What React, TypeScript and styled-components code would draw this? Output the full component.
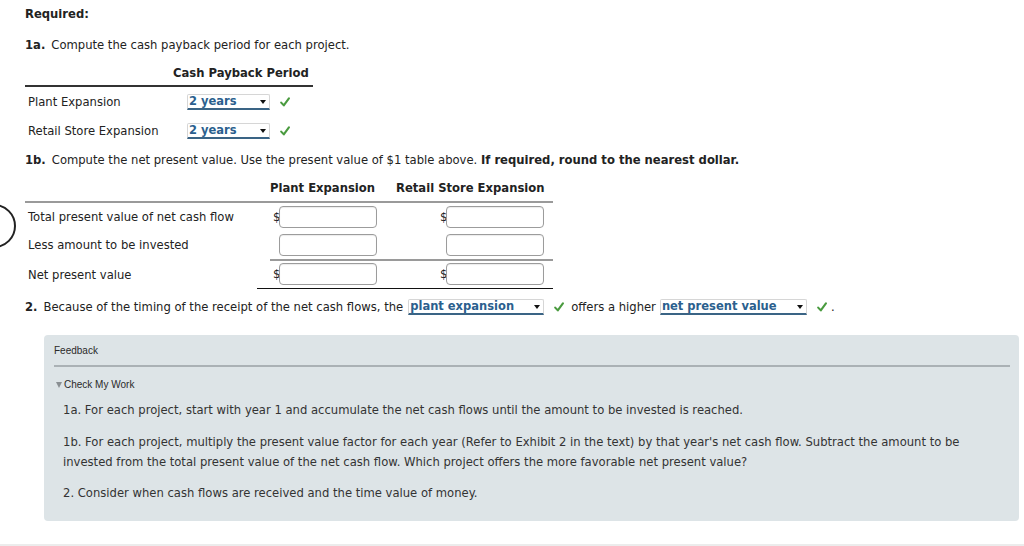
import React from "react";
import styled, { createGlobalStyle } from "styled-components";

const GlobalStyle = createGlobalStyle`
  html, body { margin: 0; padding: 0; background: #fff; }
  body {
    font-family: "DejaVu Sans", Verdana, sans-serif;
    font-size: 11.6px;
    color: #222;
    overflow: hidden;
  }
`;

const Page = styled.div`
  position: relative;
  width: 1024px;
  height: 546px;
  padding: 6px 0 0 25px;
  box-sizing: border-box;
`;

const Heading = styled.div`
  font-weight: bold;
  line-height: 16px;
  height: 16px;
`;

const Para = styled.div<{ $top: number }>`
  line-height: 16px;
  height: 16px;
  margin-top: ${(p) => p.$top}px;
  white-space: nowrap;
  display: flex;
  align-items: center;
`;

const Bold = styled.b`
  font-weight: bold;
`;

const Label = styled.span`
  margin-right: 6px;
  font-weight: bold;
`;

/* ---------- payback table ---------- */
const PayTable = styled.div`
  margin-top: 12px;
  width: 288px;
`;

const PayRow = styled.div<{ $head?: boolean }>`
  display: grid;
  grid-template-columns: 145px 143px;
  align-items: center;
  height: ${(p) => (p.$head ? "20px" : "29px")};
  ${(p) =>
    p.$head
      ? `border-bottom: 2px solid #333; align-items: start; font-weight: bold;`
      : ""}
`;

const Cell = styled.div<{ $pl?: number }>`
  padding-left: ${(p) => p.$pl ?? 0}px;
  display: flex;
  align-items: center;
  line-height: 16px;
  white-space: nowrap;
`;

/* ---------- select + check ---------- */
const SelectBox = styled.span<{ $w: number }>`
  display: inline-flex;
  align-items: center;
  justify-content: space-between;
  width: ${(p) => p.$w}px;
  height: 16px;
  box-sizing: border-box;
  border: 1px solid #d6d6d6;
  border-bottom: 2px solid #3a6485;
  border-radius: 2px 2px 0 0;
  padding: 0 3px 0 1px;
  color: #2b5f8e;
  font-weight: bold;
  font-size: 11.5px;
  line-height: 13px;
  background: #fff;
`;

const Arrow = styled.span`
  width: 0;
  height: 0;
  border-left: 3px solid transparent;
  border-right: 3px solid transparent;
  border-top: 4px solid #111;
  margin-top: 1px;
`;

const CheckIcon = styled.svg`
  width: 10px;
  height: 10px;
  margin-left: 10px;
  flex: none;
`;

const Check = () => (
  <CheckIcon viewBox="0 0 10 10">
    <path
      d="M1.2 5.6 L3.8 8.4 L8.9 1.4"
      fill="none"
      stroke="#4a9b3f"
      strokeWidth="2.1"
      strokeLinecap="round"
      strokeLinejoin="round"
    />
  </CheckIcon>
);

const Select = ({ value, width }: { value: string; width: number }) => (
  <SelectBox $w={width}>
    <span>{value}</span>
    <Arrow />
  </SelectBox>
);

/* ---------- NPV table ---------- */
const NpvTable = styled.div`
  margin-top: 12px;
  width: 528px;
`;

const NpvRow = styled.div<{ $head?: boolean; $h: number }>`
  display: grid;
  grid-template-columns: 232px 133px 163px;
  height: ${(p) => p.$h}px;
  align-items: center;
  ${(p) =>
    p.$head
      ? `border-bottom: 2px solid #9a9a9a; align-items: start; font-weight: bold;`
      : ""}
`;

const NpvCell = styled.div<{ $pl: number; $line?: number; $bottom?: boolean }>`
  height: 100%;
  box-sizing: border-box;
  padding-left: ${(p) => p.$pl}px;
  padding-top: 1px;
  display: flex;
  align-items: center;
  white-space: nowrap;
  line-height: 16px;
  ${(p) =>
    p.$line !== undefined
      ? `background: linear-gradient(#9a9a9a, #9a9a9a) no-repeat ${p.$line}px 0 / calc(100% - ${p.$line}px) 2px;`
      : ""}
  ${(p) => (p.$bottom ? `border-bottom: 1px solid #111;` : "")}
`;

const HeadCell = styled.div<{ $pl: number }>`
  padding-left: ${(p) => p.$pl}px;
  white-space: nowrap;
  line-height: 16px;
`;

const Dollar = styled.span<{ $hidden?: boolean }>`
  width: 6px;
  visibility: ${(p) => (p.$hidden ? "hidden" : "visible")};
`;

const Input = styled.div`
  width: 98px;
  height: 22px;
  box-sizing: border-box;
  border: 1px solid #9c9c9c;
  border-radius: 4px;
  background: #fff;
  box-shadow: inset 0 1px 1px rgba(0, 0, 0, 0.08);
`;

const Circle = styled.div`
  position: absolute;
  left: -28px;
  top: 204px;
  width: 40px;
  height: 40px;
  border: 2.5px solid #222;
  border-radius: 50%;
`;

const Sentence = styled.div`
  margin-top: 10px;
  display: flex;
  align-items: center;
  height: 16px;
  line-height: 16px;
  white-space: nowrap;
`;

const Gap = styled.span<{ $w: number }>`
  display: inline-block;
  width: ${(p) => p.$w}px;
`;

/* ---------- feedback ---------- */
const Feedback = styled.div`
  margin: 20px 0 0 19px;
  width: 975px;
  height: 186px;
  box-sizing: border-box;
  background: #dde4e7;
  border-radius: 4px;
  padding: 9px 9px 0 10px;
`;

const FbTitle = styled.div`
  font-family: "Liberation Sans", Arial, sans-serif;
  font-size: 10px;
  line-height: 12px;
  color: #2a2a2a;
  padding: 1px 0 8px;
  border-bottom: 2px solid #aab1b5;
`;

const FbToggle = styled.div`
  font-family: "Liberation Sans", Arial, sans-serif;
  font-size: 10px;
  line-height: 12px;
  color: #2a2a2a;
  margin-top: 12px;
  padding-left: 2px;
  display: flex;
  align-items: center;
`;

const Tri = styled.span`
  width: 0;
  height: 0;
  border-left: 3px solid transparent;
  border-right: 3px solid transparent;
  border-top: 6px solid #8a8f93;
  margin-right: 2px;
`;

const FbText = styled.p<{ $top: number }>`
  margin: ${(p) => p.$top}px 0 0 9px;
  line-height: 20px;
  color: #333;
  font-size: 11.6px;
  white-space: nowrap;
`;

const BottomRule = styled.div`
  position: absolute;
  left: 0;
  right: 0;
  bottom: 0;
  height: 2px;
  background: #ececec;
`;

export default function App() {
  return (
    <>
      <GlobalStyle />
      <Page>
        <Heading>Required:</Heading>
        <Para $top={15}>
          <Label>1a.</Label>Compute the cash payback period for each project.
        </Para>

        <PayTable>
          <PayRow $head>
            <Cell />
            <Cell $pl={3}>Cash Payback Period</Cell>
          </PayRow>
          <PayRow>
            <Cell $pl={3}>Plant Expansion</Cell>
            <Cell $pl={17}>
              <Select value="2 years" width={83} />
              <Check />
            </Cell>
          </PayRow>
          <PayRow>
            <Cell $pl={3}>Retail Store Expansion</Cell>
            <Cell $pl={17}>
              <Select value="2 years" width={83} />
              <Check />
            </Cell>
          </PayRow>
        </PayTable>

        <Para $top={7}>
          <Label>1b.</Label>Compute the net present value. Use the present value of $1 table above.&nbsp;
          <Bold>If required, round to the nearest dollar.</Bold>
        </Para>

        <NpvTable>
          <NpvRow $head $h={21}>
            <HeadCell $pl={0} />
            <HeadCell $pl={13}>Plant Expansion</HeadCell>
            <HeadCell $pl={6}>Retail Store Expansion</HeadCell>
          </NpvRow>
          <NpvRow $h={26}>
            <NpvCell $pl={3}>Total present value of net cash flow</NpvCell>
            <NpvCell $pl={16}>
              <Dollar>$</Dollar>
              <Input />
            </NpvCell>
            <NpvCell $pl={50}>
              <Dollar>$</Dollar>
              <Input />
            </NpvCell>
          </NpvRow>
          <NpvRow $h={30}>
            <NpvCell $pl={3}>Less amount to be invested</NpvCell>
            <NpvCell $pl={16}>
              <Dollar $hidden>$</Dollar>
              <Input />
            </NpvCell>
            <NpvCell $pl={50}>
              <Dollar $hidden>$</Dollar>
              <Input />
            </NpvCell>
          </NpvRow>
          <NpvRow $h={30}>
            <NpvCell $pl={3}>Net present value</NpvCell>
            <NpvCell $pl={16} $line={13} $bottom>
              <Dollar>$</Dollar>
              <Input />
            </NpvCell>
            <NpvCell $pl={50} $line={0} $bottom>
              <Dollar>$</Dollar>
              <Input />
            </NpvCell>
          </NpvRow>
        </NpvTable>

        <Sentence>
          <Label>2.</Label>Because of the timing of the receipt of the net cash flows, the
          <Gap $w={5} />
          <Select value="plant expansion" width={136} />
          <Check />
          <Gap $w={7} />
          offers a higher
          <Gap $w={4} />
          <Select value="net present value" width={147} />
          <Check />
          <Gap $w={4} />.
        </Sentence>

        <Feedback>
          <FbTitle>Feedback</FbTitle>
          <FbToggle>
            <Tri />
            Check My Work
          </FbToggle>
          <FbText $top={9}>
            1a. For each project, start with year 1 and accumulate the net cash flows until the amount to be invested is reached.
          </FbText>
          <FbText $top={12}>
            1b. For each project, multiply the present value factor for each year (Refer to Exhibit 2 in the text) by that year's net cash flow. Subtract the amount to be
            <br />
            invested from the total present value of the net cash flow. Which project offers the more favorable net present value?
          </FbText>
          <FbText $top={11}>2. Consider when cash flows are received and the time value of money.</FbText>
        </Feedback>

        <Circle />
        <BottomRule />
      </Page>
    </>
  );
}
